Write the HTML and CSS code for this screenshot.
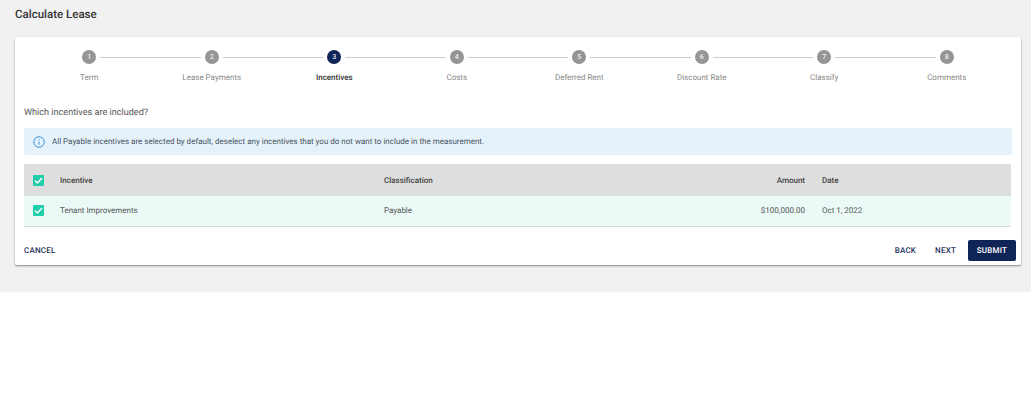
FILE: index.html
```html
<!DOCTYPE html>
<html lang="en">
<head>
  <meta charset="UTF-8" />
  <title>Calculate Lease</title>
  <link rel="stylesheet" href="styles.css">
</head>
<body>

<div class="page">
  <h2 class="page-title">Calculate Lease</h2>

  <div class="card">
    <!-- Stepper -->
    <div class="stepper">
      <div class="step"><span class="step-num">1</span><span class="step-label">Term</span></div>
      <div class="step"><span class="step-num">2</span><span class="step-label">Lease Payments</span></div>
      <div class="step active"><span class="step-num">3</span><span class="step-label">Incentives</span></div>
      <div class="step"><span class="step-num">4</span><span class="step-label">Costs</span></div>
      <div class="step"><span class="step-num">5</span><span class="step-label">Deferred Rent</span></div>
      <div class="step"><span class="step-num">6</span><span class="step-label">Discount Rate</span></div>
      <div class="step"><span class="step-num">7</span><span class="step-label">Classify</span></div>
      <div class="step"><span class="step-num">8</span><span class="step-label">Comments</span></div>
    </div>

    <p class="question">Which incentives are included?</p>

    <div class="alert">
      <svg class="alert-icon" viewBox="0 0 24 24" width="12" height="12" fill="none" stroke="#3b94dc" stroke-width="2">
        <circle cx="12" cy="12" r="10.5"/>
        <path d="M12 11v6.5M12 6.5v2"/>
      </svg>
      <span>All Payable incentives are selected by default, deselect any incentives that you do not want to include in the measurement.</span>
    </div>

    <table class="grid">
      <thead>
        <tr>
          <th class="col-check">
            <span class="checkbox"><svg viewBox="0 0 12 12" width="11" height="11" fill="none" stroke="#fff" stroke-width="1.6"><path d="M2.2 6.2l2.6 2.6 5-5.4"/></svg></span>
          </th>
          <th class="col-name">Incentive</th>
          <th class="col-class">Classification</th>
          <th class="col-amount">Amount</th>
          <th class="col-date">Date</th>
        </tr>
      </thead>
      <tbody>
        <tr>
          <td class="col-check">
            <span class="checkbox"><svg viewBox="0 0 12 12" width="11" height="11" fill="none" stroke="#fff" stroke-width="1.6"><path d="M2.2 6.2l2.6 2.6 5-5.4"/></svg></span>
          </td>
          <td>Tenant Improvements</td>
          <td>Payable</td>
          <td class="col-amount">$100,000.00</td>
          <td class="col-date">Oct 1, 2022</td>
        </tr>
      </tbody>
    </table>

    <div class="actions">
      <a href="#" class="btn">CANCEL</a>
      <div class="actions-right">
        <a href="#" class="btn">BACK</a>
        <a href="#" class="btn">NEXT</a>
        <a href="#" class="btn btn-primary">SUBMIT</a>
      </div>
    </div>
  </div>
</div>

</body>
</html>
```

FILE: styles.css
```css
* {
  margin: 0;
  padding: 0;
  box-sizing: border-box;
}
body {
  font-family: Roboto, Arial, sans-serif;
  background: #fff;
  color: #444;
  text-rendering: geometricPrecision;
}
a {
  color: inherit;
  text-decoration: none;
}
.page {
  background: #f1f1f1;
  height: 292px;
  width: 1031px;
  padding: 7px 10px 0 15px;
}
.page-title {
  font-size: 11.5px;
  font-weight: 500;
  line-height: 15px;
  color: #333;
  margin-bottom: 15px;
}
.card {
  background: #fff;
  height: 228px;
  border-radius: 2px;
  box-shadow: 0 1px 2px rgba(0,0,0,0.45);
  padding: 13px 9px 0 9px;
}

/* Stepper */
.stepper {
  display: flex;
  padding: 0 4px;
}
.step {
  position: relative;
  flex: 1;
  display: flex;
  flex-direction: column;
  align-items: center;
}
.step:not(:last-child)::after {
  content: "";
  position: absolute;
  top: 7px;
  left: calc(50% + 11px);
  right: calc(-50% + 11px);
  border-top: 1px solid #ccc;
}
.step-num {
  width: 14px;
  height: 14px;
  border-radius: 50%;
  background: #959595;
  color: #eee;
  font-size: 7px;
  font-weight: 500;
  line-height: 14px;
  text-align: center;
}
.step-label {
  margin-top: 8px;
  font-size: 8px;
  line-height: 12px;
  color: #888;
}
.step.active .step-num {
  background: #0f2557;
}
.step.active .step-label {
  color: #333;
  font-weight: 500;
}

.question {
  margin-top: 23px;
  font-size: 9.1px;
  line-height: 12px;
  color: #555;
}

/* Info alert */
.alert {
  display: flex;
  align-items: center;
  gap: 7px;
  height: 27px;
  margin-top: 9px;
  padding-left: 9px;
  background: #e6f2fb;
  border-radius: 2px;
  font-size: 8px;
  color: #46535f;
}

/* Table */
.grid {
  width: 987px;
  margin-top: 9px;
  border-collapse: collapse;
  table-layout: fixed;
  font-size: 8px;
}
.grid th {
  height: 32px;
  background: #dedede;
  color: #444;
  font-weight: 500;
  text-align: left;
}
.grid td {
  height: 30px;
  background: #ebfaf7;
  color: #555;
  border-bottom: 1px solid #d6dedc;
}
.col-check {
  width: 36px;
  padding-left: 9px;
}
.col-name {
  width: 324px;
}
.col-class {
  width: 300px;
}
.grid .col-amount {
  width: 121px;
  text-align: right;
}
.grid .col-date {
  padding-left: 17px;
}
.checkbox {
  display: flex;
  align-items: center;
  justify-content: center;
  width: 11px;
  height: 11px;
  background: #22cdaa;
  border-radius: 1px;
}

/* Footer buttons */
.actions {
  display: flex;
  justify-content: space-between;
  align-items: center;
  margin-top: 13px;
}
.actions-right {
  display: flex;
  align-items: center;
  margin-right: -4px;
}
.btn {
  font-size: 8px;
  font-weight: 500;
  letter-spacing: 0.2px;
  color: #27315a;
}
.actions-right .btn {
  margin-left: 19px;
}
.actions-right .btn-primary {
  width: 48px;
  height: 21px;
  margin-left: 12px;
  line-height: 21px;
  text-align: center;
  background: #0f2557;
  color: #fff;
  border-radius: 2px;
}
```
